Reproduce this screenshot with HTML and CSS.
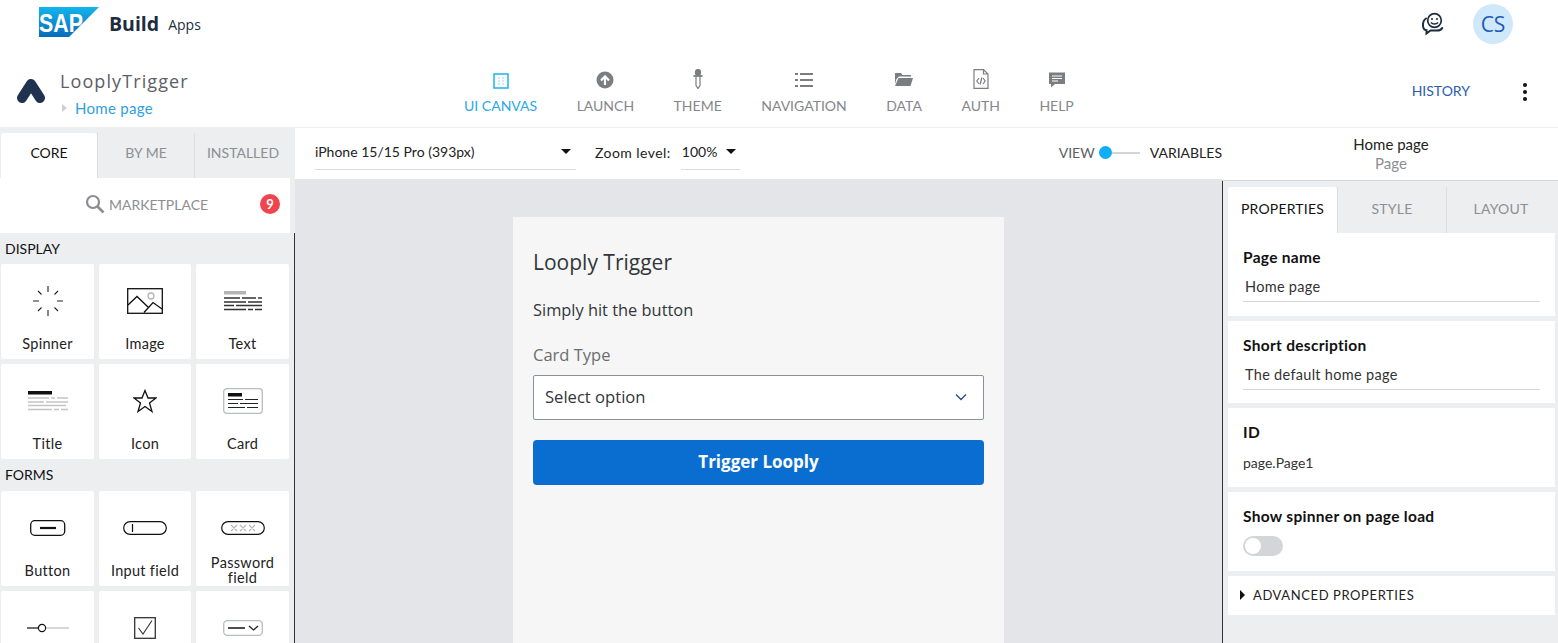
FILE: index.html
```html
<!DOCTYPE html>
<html lang="en">

<head>
    <meta charset="UTF-8">
    <title>LooplyTrigger - SAP Build Apps</title>
    <link rel="stylesheet" href="styles.css">
</head>

<body>
    <header class="shellbar">
        <svg class="sap-logo" width="60" height="30" viewBox="0 0 60 30">
            <defs>
                <linearGradient id="sapGrad" x1="0" y1="0" x2="0" y2="1">
                    <stop offset="0" stop-color="#12b5ef"></stop>
                    <stop offset="1" stop-color="#0a6ab8"></stop>
                </linearGradient>
            </defs>
            <polygon points="0,0 60,0 30,30 0,30" fill="url(#sapGrad)"></polygon>
            <text x="0" y="25" textLength="44" lengthAdjust="spacingAndGlyphs" class="sap-letters">SAP</text>
        </svg>
        <span class="brand">Build</span>
        <span class="brand-sub">Apps</span>
        <div class="shell-right">
            <svg width="24" height="24" viewBox="0 0 24 24" fill="none" stroke="#1d2d3e" stroke-width="2">
                <path d="M5 6.500C2.500 8 1.800 11 2 14c.2 2.500 1.500 4 3.500 4.200V21.500L9.500 18.500H16c2.500 0 4.500-.8 5.200-2.500" stroke-linecap="round"></path>
                <circle cx="13.500" cy="8.500" r="6.800" stroke-width="1.700"></circle>
                <circle cx="11" cy="7" r="1" fill="#1d2d3e" stroke="none"></circle>
                <circle cx="16" cy="7" r="1" fill="#1d2d3e" stroke="none"></circle>
                <path d="M10 10.500c1.500 2 5.500 2 7 0" stroke-width="1.500"></path>
            </svg>
            <div class="avatar">CS</div>
        </div>
    </header>

    <div class="appbar">
        <div class="app-title">
            <svg class="app-logo" width="30" height="26" viewBox="0 0 30 26">
                <path d="M6 20 15 6 24 20" fill="none" stroke="#1f3350" stroke-width="10" stroke-linecap="round" stroke-linejoin="round"></path>
            </svg>
            <div>
                <div class="app-name">LooplyTrigger</div>
                <div class="crumb"><span class="crumb-arrow"></span>Home page</div>
            </div>
        </div>
        <nav class="tabs-main">
            <a class="nav-item active">
                <svg width="16" height="16" viewBox="0 0 16 16" fill="none" stroke="#1fb2ee" stroke-width="1.500">
                    <rect x="1" y="1" width="14" height="14"></rect>
                    <path d="M5.500 5h1M9.500 5h1M5.500 8h1M9.500 8h1M5.500 11h1M9.500 11h1" stroke-width="1.200"></path>
                </svg>
                UI CANVAS
            </a>
            <a class="nav-item">
                <svg width="18" height="18" viewBox="0 0 18 18">
                    <circle cx="9" cy="9" r="8.500" fill="#7b7d82"></circle>
                    <path d="M9 14V6M5 9.500 9 5.300l4 4.200" fill="none" stroke="#fff" stroke-width="2.200"></path>
                </svg>
                LAUNCH
            </a>
            <a class="nav-item">
                <svg width="12" height="20" viewBox="0 0 12 20" fill="none" stroke="#7b7d82" stroke-width="1.200">
                    <rect x="3.500" y="0.500" width="5" height="6" rx="2.500" fill="#7b7d82"></rect>
                    <path d="M1.500 7h9" stroke-width="1.800"></path>
                    <path d="M4 7.500v9L6 19.500l2-3v-9"></path>
                </svg>
                THEME
            </a>
            <a class="nav-item">
                <svg width="18" height="18" viewBox="0 0 18 18" fill="#7b7d82">
                    <rect x="0" y="2" width="3" height="2"></rect>
                    <rect x="5" y="2" width="13" height="2"></rect>
                    <rect x="0" y="8" width="3" height="2"></rect>
                    <rect x="5" y="8" width="13" height="2"></rect>
                    <rect x="0" y="14" width="3" height="2"></rect>
                    <rect x="5" y="14" width="13" height="2"></rect>
                </svg>
                NAVIGATION
            </a>
            <a class="nav-item">
                <svg width="18" height="18" viewBox="0 0 18 18" fill="#7b7d82">
                    <path d="M0 2h6l1.500 2H16v1.500H4L1.500 8 0 13z"></path>
                    <path d="M3.500 7H18l-2.500 8H0z"></path>
                </svg>
                DATA
            </a>
            <a class="nav-item">
                <svg width="18" height="20" viewBox="0 0 18 20" fill="none" stroke="#7b7d82" stroke-width="1.200">
                    <path d="M2 .6h9.500L16 5v14.400H2zM11.500.6V5H16"></path>
                    <path d="M7 9 4.800 12 7 15M11 9l2.200 3L11 15M9.800 8.500 8.200 15.500"></path>
                </svg>
                AUTH
            </a>
            <a class="nav-item">
                <svg width="18" height="18" viewBox="0 0 18 18">
                    <path d="M1 1.500h16v11.500H7L3 16.500V13H1z" fill="#7b7d82"></path>
                    <path d="M4 5h10M4 7.500h10M4 10h6" stroke="#fff" stroke-width="1.200"></path>
                </svg>
                HELP
            </a>
        </nav>
        <a class="history">HISTORY</a>
        <div class="kebab"><i></i><i></i><i></i></div>
    </div>

    <main class="workspace">
        <aside class="palette">
            <div class="palette-tabs">
                <div class="ptab current">CORE</div>
                <div class="ptab">BY ME</div>
                <div class="ptab">INSTALLED</div>
            </div>
            <div class="market">
                <svg width="20" height="20" viewBox="0 0 20 20" fill="none" stroke="#8b8d91" stroke-width="2.200">
                    <circle cx="8" cy="8" r="6"></circle>
                    <path d="M12.500 12.500 18.500 18.500" stroke-width="2.600"></path>
                </svg>
                <span class="market-label">MARKETPLACE</span>
                <span class="badge">9</span>
            </div>
            <div class="palette-list">
                <h4 class="group-title">DISPLAY</h4>
                <div class="widget-grid">
                    <div class="widget">
                        <div class="widget-icon">
                            <svg width="30" height="30" viewBox="0 0 30 30" stroke="#222" stroke-width="1.100">
                                <path d="M15 0v6M15 24v6M0 15h6M24 15h6M5 5l3.500 3.500M25 5l-3.500 3.500M5 25l3.500-3.500M25 25l-3.500-3.500"></path>
                            </svg>
                        </div>
                        <div class="widget-name">Spinner</div>
                    </div>
                    <div class="widget">
                        <div class="widget-icon">
                            <svg width="36" height="26" viewBox="0 0 36 26" fill="none" stroke="#111" stroke-width="1.300">
                                <rect x="0.700" y="0.700" width="34.600" height="24.600"></rect>
                                <path d="M1 17 10 8.500 22 20M17 24.500 26 14.500 35 21"></path>
                                <circle cx="24" cy="8" r="3" stroke="#b5b5b5"></circle>
                            </svg>
                        </div>
                        <div class="widget-name">Image</div>
                    </div>
                    <div class="widget">
                        <div class="widget-icon">
                            <svg width="40" height="20" viewBox="0 0 40 20" stroke="#333" stroke-width="1.300">
                                <rect x="1" y="0" width="22" height="3.500" fill="#b5b5b5" stroke="none"></rect>
                                <path d="M1 7h16M19 7h14M35 7h4M1 11h22M25 11h14M1 14.500h10M13 14.500h26M1 18.500h22M25 18.500h5M32 18.500h7"></path>
                            </svg>
                        </div>
                        <div class="widget-name">Text</div>
                    </div>
                    <div class="widget">
                        <div class="widget-icon">
                            <svg width="40" height="20" viewBox="0 0 40 20" stroke="#c4c4c4" stroke-width="1.300">
                                <rect x="0" y="0" width="24" height="3.500" fill="#111" stroke="none"></rect>
                                <path d="M0 7h21M23 7h4M29 7h11M0 11h16M18 11h22M0 14.500h38M0 18.500h24M26 18.500h5M33 18.500h7"></path>
                            </svg>
                        </div>
                        <div class="widget-name">Title</div>
                    </div>
                    <div class="widget">
                        <div class="widget-icon">
                            <svg width="24" height="24" viewBox="0 0 24 24" fill="none" stroke="#111" stroke-width="1.300">
                                <path d="M12 1.500 15 9h8l-6.500 5L19 22.500 12 17.500 5 22.500 7.500 14 1 9h8z"></path>
                            </svg>
                        </div>
                        <div class="widget-name">Icon</div>
                    </div>
                    <div class="widget">
                        <div class="widget-icon">
                            <svg width="40" height="26" viewBox="0 0 40 26" stroke="#222" stroke-width="1.200">
                                <rect x="0.700" y="0.700" width="38.600" height="24.600" rx="3" fill="none" stroke="#b9bcc0" stroke-width="1.300"></rect>
                                <rect x="5" y="5" width="14" height="3.500" fill="#111" stroke="none"></rect>
                                <path d="M5 11.500h15M22 11.500h13M5 15.500h10M17 15.500h18M5 19.500h17M24 19.500h11"></path>
                            </svg>
                        </div>
                        <div class="widget-name">Card</div>
                    </div>
                </div>
                <h4 class="group-title forms">FORMS</h4>
                <div class="widget-grid">
                    <div class="widget">
                        <div class="widget-icon">
                            <svg width="36" height="16" viewBox="0 0 36 16" fill="none" stroke="#111" stroke-width="1.300">
                                <rect x="0.700" y="0.700" width="34" height="14.600" rx="4"></rect>
                                <path d="M10 8h16" stroke-width="2.200"></path>
                            </svg>
                        </div>
                        <div class="widget-name">Button</div>
                    </div>
                    <div class="widget">
                        <div class="widget-icon">
                            <svg width="44" height="14" viewBox="0 0 44 14" fill="none" stroke="#111" stroke-width="1.200">
                                <rect x="0.700" y="0.700" width="42.600" height="12.600" rx="6.300"></rect>
                                <path d="M9.500 3v8"></path>
                            </svg>
                        </div>
                        <div class="widget-name">Input field</div>
                    </div>
                    <div class="widget">
                        <div class="widget-icon">
                            <svg width="44" height="14" viewBox="0 0 44 14" fill="none" stroke="#111" stroke-width="1.200">
                                <rect x="0.700" y="0.700" width="42.600" height="12.600" rx="6.300"></rect>
                                <path d="M10 4l6 6M16 4l-6 6M19 4l6 6M25 4l-6 6M28 4l6 6M34 4l-6 6" stroke="#b9b9b9"></path>
                            </svg>
                        </div>
                        <div class="widget-name">Password field</div>
                    </div>
                    <div class="widget">
                        <div class="widget-icon">
                            <svg width="42" height="10" viewBox="0 0 42 10" fill="none" stroke="#111" stroke-width="1.200">
                                <path d="M0 5h11"></path>
                                <circle cx="15" cy="5" r="3.600"></circle>
                                <path d="M19 5h23" stroke="#bbb"></path>
                            </svg>
                        </div>
                    </div>
                    <div class="widget">
                        <div class="widget-icon">
                            <svg width="22" height="22" viewBox="0 0 22 22" fill="none" stroke="#333" stroke-width="1.300">
                                <rect x="0.700" y="0.700" width="20.600" height="20.600"></rect>
                                <path d="M4.500 11 9 17 18 3.500" stroke-width="1.100"></path>
                            </svg>
                        </div>
                    </div>
                    <div class="widget">
                        <div class="widget-icon">
                            <svg width="40" height="16" viewBox="0 0 40 16" fill="none" stroke="#222" stroke-width="1.300">
                                <rect x="0.700" y="0.700" width="38.600" height="14.600" rx="3.500" stroke="#b9bcc0"></rect>
                                <path d="M5 8h17" stroke-width="1.600"></path>
                                <path d="M26 6l4.500 4L35 6"></path>
                            </svg>
                        </div>
                    </div>
                </div>
            </div>
        </aside>

        <section class="center">
            <div class="canvas-bar">
                <div class="picker device-picker">iPhone 15/15 Pro (393px)<span class="caret"></span></div>
                <span class="zoom-label">Zoom level:</span>
                <div class="picker zoom-picker">100%<span class="caret"></span></div>
                <div class="mode-switch">
                    <span class="mode-view">VIEW</span>
                    <span class="mode-track"><i></i></span>
                    <span>VARIABLES</span>
                </div>
            </div>
            <div class="canvas">
                <div class="phone">
                    <h2 class="phone-title">Looply Trigger</h2>
                    <p class="phone-text">Simply hit the button</p>
                    <label class="phone-label">Card Type</label>
                    <div class="phone-select">
                        Select option
                        <svg width="12" height="8" viewBox="0 0 12 8" fill="none" stroke="#2a4a7a" stroke-width="1.300">
                            <path d="M1 1.500 6 6.500 11 1.500"></path>
                        </svg>
                    </div>
                    <div class="phone-button">Trigger Looply</div>
                </div>
            </div>
        </section>

        <aside class="props">
            <div class="props-head">
                <div class="props-name">Home page</div>
                <div class="props-type">Page</div>
            </div>
            <div class="props-tabs">
                <div class="rtab current">PROPERTIES</div>
                <div class="rtab">STYLE</div>
                <div class="rtab">LAYOUT</div>
            </div>
            <div class="prop-card card-name">
                <div class="prop-title">Page name</div>
                <div class="prop-input">Home page</div>
            </div>
            <div class="prop-card card-desc">
                <div class="prop-title">Short description</div>
                <div class="prop-input">The default home page</div>
            </div>
            <div class="prop-card card-id">
                <div class="prop-title">ID</div>
                <div class="prop-value">page.Page1</div>
            </div>
            <div class="prop-card card-spin">
                <div class="prop-title">Show spinner on page load</div>
                <div class="toggle"><i></i></div>
            </div>
            <div class="prop-card card-adv"><span class="adv-arrow"></span>ADVANCED PROPERTIES</div>
        </aside>
    </main>
</body>

</html>
```

FILE: styles.css
```css
* {
    box-sizing: border-box;
}

html,
body {
    height: 643px;
    margin: 0;
    overflow: hidden;
}

body {
    font-family: 'Lato', 'Open Sans', sans-serif;
    color: #1d2d3e;
    background-color: #fff;
}

/* top shell */

.shellbar {
    height: 52px;
    display: flex;
    align-items: flex-start;
    padding: 7px 45px 0 39px;
}

.sap-letters {
    font-family: 'Liberation Sans', sans-serif;
    font-weight: 700;
    font-size: 25px;
    fill: #fff;
}

.brand {
    font-family: 'Open Sans', sans-serif;
    font-size: 19.500px;
    font-weight: 700;
    margin: 3px 0 0 10px;
}

.brand-sub {
    font-family: 'Open Sans', sans-serif;
    font-size: 14px;
    margin: 8px 0 0 9px;
}

.shell-right {
    margin-left: auto;
    display: flex;
    align-items: center;
    gap: 28px;
    margin-top: -3px;
}

.avatar {
    width: 40px;
    height: 40px;
    border-radius: 50%;
    background-color: #cfe9fb;
    color: #1d5bb5;
    font-family: 'Open Sans', sans-serif;
    font-size: 21px;
    display: flex;
    align-items: center;
    justify-content: center;
}

/* app toolbar */

.appbar {
    height: 76px;
    display: flex;
    border-bottom: 1px solid #f0f0f0;
}

.app-title {
    width: 464px;
    display: flex;
    padding: 17px 0 0 16px;
}

.app-logo {
    margin: 9px 14px 0 0;
}

.app-name {
    font-family: 'Open Sans', sans-serif;
    font-size: 18px;
    letter-spacing: 1.100px;
    color: #5b5e66;
    line-height: 24px;
}

.crumb {
    font-size: 15px;
    letter-spacing: 0.300px;
    color: #2f9fe0;
    margin-top: 6px;
    display: flex;
    align-items: center;
}

.crumb-arrow {
    width: 0;
    height: 0;
    border-left: 5px solid #ccd0d4;
    border-top: 4px solid transparent;
    border-bottom: 4px solid transparent;
    margin: 0 8px 0 2px;
}

.tabs-main {
    display: flex;
    gap: 39.500px;
}

.nav-item {
    font-size: 14px;
    color: #85878c;
    display: flex;
    flex-direction: column;
    align-items: center;
    justify-content: flex-end;
    height: 62px;
    gap: 8px;
    white-space: nowrap;
}

.nav-item.active {
    color: #2aa9e8;
}

.history {
    margin-left: auto;
    margin-top: 30px;
    font-size: 14px;
    color: #2a5db0;
}

.kebab {
    margin: 31px 31px 0 53px;
    display: flex;
    flex-direction: column;
    gap: 3px;
    width: 4px;
}

.kebab i {
    width: 4px;
    height: 4px;
    border-radius: 50%;
    background-color: #111;
}

/* main area */

.workspace {
    height: 515px;
    display: flex;
}

.palette {
    width: 295px;
    flex: none;
    background-color: #eceef0;
    display: flex;
    flex-direction: column;
}

.palette-tabs {
    display: flex;
    height: 50px;
    padding: 5px 0 0 1px;
}

.ptab {
    width: 97px;
    font-size: 14px;
    color: #8c8e92;
    display: flex;
    align-items: center;
    justify-content: center;
    border-left: 1px solid #dcdee0;
    padding-bottom: 6px;
}

.ptab.current {
    width: 96px;
    background-color: #fff;
    color: #111;
    border-left: none;
    border-radius: 3px 3px 0 0;
}

.market {
    height: 55px;
    width: 290px;
    background-color: #fff;
    display: flex;
    align-items: center;
    padding: 0 0 3px 85px;
}

.market-label {
    font-size: 14px;
    color: #8c8e92;
    margin-left: 4px;
}

.badge {
    margin-left: auto;
    margin-right: 10px;
    width: 20px;
    height: 20px;
    border-radius: 50%;
    background-color: #f1444e;
    color: #fff;
    font-size: 13px;
    font-weight: 700;
    display: flex;
    align-items: center;
    justify-content: center;
}

.palette-list {
    flex: 1;
    border-right: 1px solid #333;
    overflow: hidden;
    padding-left: 1px;
}

.group-title {
    margin: 0;
    height: 31px;
    padding-left: 4px;
    font-size: 14px;
    font-weight: 400;
    color: #111;
    display: flex;
    align-items: center;
}

.group-title.forms {
    height: 32px;
    padding-bottom: 2px;
}

.widget-grid {
    display: grid;
    grid-template-columns: 93px 92px 93px;
    grid-auto-rows: 95px;
    gap: 5px;
}

.widget {
    background-color: #fff;
    border-radius: 2px;
}

.widget-icon {
    height: 64px;
    padding-top: 10px;
    display: flex;
    align-items: center;
    justify-content: center;
}

.widget-name {
    height: 30px;
    display: flex;
    align-items: center;
    justify-content: center;
    text-align: center;
    font-size: 14.500px;
    line-height: 15px;
    letter-spacing: 0.300px;
    color: #222;
    padding: 0 10px;
}

/* center */

.center {
    flex: 1;
    display: flex;
    flex-direction: column;
    min-width: 0;
}

.canvas-bar {
    height: 51px;
    display: flex;
    align-items: flex-start;
    padding: 8px 0 0 20px;
    font-size: 14px;
    color: #222;
}

.picker {
    height: 34px;
    border-bottom: 1px solid #dcdcdc;
    display: flex;
    align-items: center;
    padding-bottom: 2px;
}

.device-picker {
    width: 261px;
    justify-content: space-between;
    padding-right: 5px;
}

.zoom-label {
    margin: 8px 10px 0 19px;
    letter-spacing: 0.450px;
}

.zoom-picker {
    width: 59px;
    gap: 9px;
    padding-left: 1px;
}

.caret {
    width: 0;
    height: 0;
    border-top: 5px solid #111;
    border-left: 5px solid transparent;
    border-right: 5px solid transparent;
}

.mode-switch {
    margin: 8px 0 0 auto;
    display: flex;
    align-items: center;
    gap: 4px;
}

.mode-view {
    color: #5b5e66;
}

.mode-track {
    width: 41px;
    height: 2px;
    background-color: #d3d5d8;
    display: flex;
    align-items: center;
    margin-right: 6px;
}

.mode-track i {
    width: 13px;
    height: 13px;
    border-radius: 50%;
    background-color: #10aef5;
}

.canvas {
    flex: 1;
    background-color: #e3e5e8;
    padding: 38px 0 0 218px;
    overflow: hidden;
}

.phone {
    width: 491px;
    height: 600px;
    background-color: #f6f6f7;
    padding: 0 20px;
    font-family: 'Open Sans', sans-serif;
    color: #32363a;
}

.phone-title {
    margin: 0;
    padding-top: 30px;
    font-size: 21px;
    font-weight: 400;
    line-height: 30px;
}

.phone-text {
    margin: 21px 0 0;
    font-size: 16.400px;
    line-height: 24px;
}

.phone-label {
    display: block;
    margin-top: 21px;
    font-size: 16.500px;
    line-height: 24px;
    color: #6a6d70;
}

.phone-select {
    margin-top: 8px;
    height: 45px;
    background-color: #fff;
    border: 1px solid #89919a;
    border-radius: 2px;
    display: flex;
    align-items: center;
    justify-content: space-between;
    padding: 0 16px 2px 11px;
    font-size: 16.600px;
}

.phone-button {
    margin-top: 20px;
    height: 45px;
    background-color: #0a6ed1;
    border-radius: 4px;
    color: #fff;
    font-weight: 700;
    font-size: 17px;
    display: flex;
    align-items: center;
    justify-content: center;
    padding-bottom: 2px;
}

/* properties */

.props {
    width: 336px;
    flex: none;
    background-color: #eceef0;
    border-left: 1px solid #333;
    margin-top: 51px;
    display: flex;
    flex-direction: column;
    padding: 0 3px 0 5px;
}

.props-head {
    background-color: #fff;
    margin: -51px -3px 0 -6px;
    height: 53px;
    border-bottom: 1px solid #d5d7d9;
    text-align: center;
    font-size: 15px;
    padding: 7px 0 0 2px;
    color: #222;
    line-height: 19px;
}

.props-type {
    color: #8c8e92;
}

.props-tabs {
    display: flex;
    height: 52px;
    padding-top: 6px;
    flex: none;
}

.rtab {
    width: 109px;
    font-size: 14px;
    letter-spacing: 0.200px;
    color: #8c8e92;
    display: flex;
    align-items: center;
    justify-content: center;
    border-left: 1px solid #dcdee0;
    padding-bottom: 4px;
}

.rtab.current {
    background-color: #fff;
    color: #111;
    border-left: none;
    border-radius: 3px 3px 0 0;
}

.prop-card {
    background-color: #fff;
    padding: 15px 15px 0;
    margin-bottom: 5px;
    flex: none;
}

.card-name {
    height: 83px;
}

.card-desc {
    height: 82px;
}

.card-id {
    height: 79px;
}

.card-spin {
    height: 79px;
}

.card-adv {
    height: 39px;
    padding: 0 0 1px 12px;
    display: flex;
    align-items: center;
    font-size: 13px;
    letter-spacing: 0.600px;
    color: #222;
}

.adv-arrow {
    width: 0;
    height: 0;
    border-left: 5px solid #111;
    border-top: 5px solid transparent;
    border-bottom: 5px solid transparent;
    margin-right: 8px;
}

.prop-title {
    font-size: 15.500px;
    font-weight: 700;
    letter-spacing: 0.300px;
    color: #111;
    line-height: 19px;
}

.prop-input {
    margin-top: 10px;
    height: 25px;
    border-bottom: 1px solid #d5d7d9;
    padding: 1px 0 0 2px;
    font-size: 14.500px;
    letter-spacing: 0.300px;
    color: #333;
}

.prop-value {
    margin-top: 12px;
    font-size: 14px;
    color: #333;
}

.toggle {
    margin-top: 10px;
    width: 40px;
    height: 20px;
    border-radius: 10px;
    background-color: #d3d5d8;
    padding: 2px;
}

.toggle i {
    display: block;
    width: 16px;
    height: 16px;
    border-radius: 50%;
    background-color: #fff;
}
```
